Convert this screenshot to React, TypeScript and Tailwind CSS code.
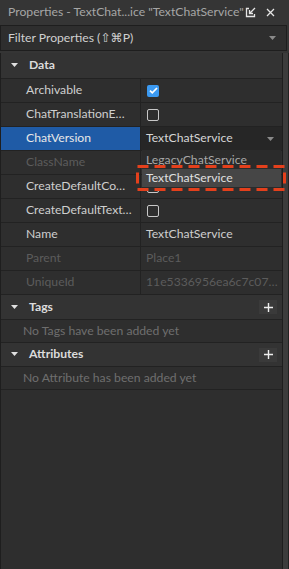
import { useState } from 'react';

type Row = {
  label: string;
  kind: 'check' | 'text' | 'select';
  value?: string;
  checked?: boolean;
  disabled?: boolean;
  selected?: boolean;
};

const DATA_ROWS: Row[] = [
  { label: 'Archivable', kind: 'check', checked: true },
  { label: 'ChatTranslationE…', kind: 'check' },
  { label: 'ChatVersion', kind: 'select', value: 'TextChatService', selected: true },
  { label: 'ClassName', kind: 'text', value: '', disabled: true },
  { label: 'CreateDefaultCo…', kind: 'check' },
  { label: 'CreateDefaultText…', kind: 'check' },
  { label: 'Name', kind: 'text', value: 'TextChatService' },
  { label: 'Parent', kind: 'text', value: 'Place1', disabled: true },
  { label: 'UniqueId', kind: 'text', value: '11e5336956ea6c7c07…', disabled: true },
];

function Caret({ className }: { className?: string }) {
  return (
    <svg width="7" height="4" viewBox="0 0 7 4" className={className}>
      <path d="M0 0h7L3.5 4z" fill="currentColor" />
    </svg>
  );
}

function Checkbox({ checked }: { checked?: boolean }) {
  if (checked) {
    return (
      <div className="flex h-[12px] w-[12px] items-center justify-center rounded-[2px] bg-[#3b9af2]">
        <svg width="9" height="7" viewBox="0 0 9 7">
          <path d="M1 3.6l2.3 2.2L8 1" fill="none" stroke="white" strokeWidth="1.7" />
        </svg>
      </div>
    );
  }
  return <div className="h-[12px] w-[12px] rounded-[2px] border border-[#c8c8c8]" />;
}

function PropRow({ row }: { row: Row }) {
  return (
    <div className="flex h-[24px] border-b border-[#222]">
      <div
        className={`flex w-[140px] items-center pl-[25px] border-r border-[#222] ${
          row.selected ? 'bg-[#1f5ba6] text-[#e8e8e8]' : row.disabled ? 'text-[#5c5c5c]' : 'text-[#cfcfcf]'
        }`}
      >
        {row.label}
      </div>
      <div className="flex flex-1 items-center">
        {row.kind === 'check' && (
          <div className="pl-[6px]">
            <Checkbox checked={row.checked} />
          </div>
        )}
        {row.kind === 'text' && (
          <span className={`pl-[5px] ${row.disabled ? 'text-[#5c5c5c]' : 'text-[#cfcfcf]'}`}>{row.value}</span>
        )}
        {row.kind === 'select' && (
          <div className="flex h-full flex-1 items-center justify-between bg-[#262626] pl-[5px] pr-[8px] text-[#d6d6d6]">
            <span>{row.value}</span>
            <Caret className="text-[#8a8a8a]" />
          </div>
        )}
      </div>
    </div>
  );
}

function SectionHeader({ title, add, h }: { title: string; add?: boolean; h: string }) {
  return (
    <div className={`flex ${h} items-center justify-between border-b border-[#222] bg-[#333] pl-[10px] pr-[5px]`}>
      <div className="flex items-center gap-[11px]">
        <Caret className="text-[#e0e0e0]" />
        <span className="font-bold text-[#dcdcdc]">{title}</span>
      </div>
      {add && (
        <div className="flex h-[14px] w-[18px] items-center justify-center bg-[#3a3a3a] text-[#eee]">
          <svg width="9" height="9" viewBox="0 0 9 9">
            <path d="M4.5 0v9M0 4.5h9" stroke="currentColor" strokeWidth="1.4" />
          </svg>
        </div>
      )}
    </div>
  );
}

function EmptyRow({ text }: { text: string }) {
  return (
    <div className="flex h-[23px] items-center border-b border-[#222] pl-[22px] text-[#6e6e6e]">{text}</div>
  );
}

export default function App() {
  const [open] = useState(true);

  return (
    <div className="relative h-[569px] w-[289px] overflow-hidden bg-[#2e2e2e] text-[12.2px] [font-family:Lato,'DejaVu_Sans',sans-serif]">
      {/* title bar */}
      <div className="flex h-[25px] items-center justify-between bg-[#353535] pl-[8px] pr-[14px] text-[#a6a6a6]">
        <span className="whitespace-nowrap">Properties - TextChat...ice "TextChatService"</span>
        <div className="flex items-center gap-[10px]">
          <svg width="11" height="11" viewBox="0 0 11 11" className="text-[#e6e6e6]">
            <path d="M4 1.5H1.5v8h8V7" fill="none" stroke="currentColor" strokeWidth="1.3" />
            <path d="M10 1L4.5 6.5M4.5 3v3.5H8" fill="none" stroke="currentColor" strokeWidth="1.3" />
          </svg>
          <svg width="9" height="9" viewBox="0 0 9 9" className="text-[#e6e6e6]">
            <path d="M1 1l7 7M8 1L1 8" stroke="currentColor" strokeWidth="1.3" />
          </svg>
        </div>
      </div>

      {/* filter */}
      <div className="bg-[#353535] pb-[2px] pr-[2px]">
        <div className="flex h-[26px] items-center justify-between border border-[#1e1e1e] bg-[#2e2e2e] pl-[7px] pr-[10px] text-[#d0d0d0]">
          <span>Filter Properties (⇧⌘P)</span>
          <Caret className="text-[#8a8a8a]" />
        </div>
      </div>

      {/* panel */}
      <div className="flex">
        <div className="w-[283px] border-x border-[#1e1e1e]">
          <SectionHeader title="Data" h="h-[26px]" />
          {DATA_ROWS.map((r) => (
            <PropRow key={r.label} row={r} />
          ))}
          <SectionHeader title="Tags" add h="h-[25px]" />
          <EmptyRow text="No Tags have been added yet" />
          <SectionHeader title="Attributes" add h="h-[24px]" />
          <EmptyRow text="No Attribute has been added yet" />
        </div>
        <div className="h-[516px] w-[5px] bg-[#3c3c3c]" />
        <div className="h-[516px] w-[1px] bg-[#222]" />
      </div>

      {/* dropdown list */}
      {open && (
        <div className="absolute left-[142px] top-[150px] w-[139px] bg-[#2b2b2b] py-[1px]">
          <div className="flex h-[18px] items-center pl-[4px] text-[#a8a8a8]">LegacyChatService</div>
          <div className="flex h-[18px] items-center bg-[#464646] pl-[4px] text-[#e0e0e0]">TextChatService</div>
        </div>
      )}

      {/* annotation */}
      <svg className="absolute left-[136px] top-[165px]" width="150" height="26" viewBox="0 0 150 26">
        <rect x="1.5" y="1.5" width="147" height="23" fill="none" stroke="#e4401c" strokeWidth="3" strokeDasharray="11 6" />
      </svg>
    </div>
  );
}
